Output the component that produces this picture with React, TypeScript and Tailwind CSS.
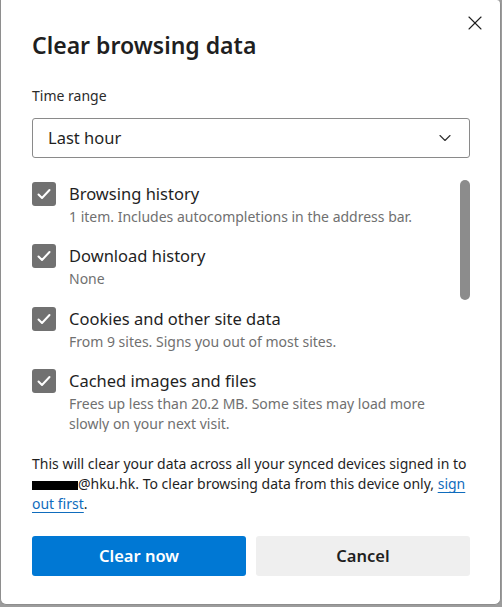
import { X, ChevronDown } from "lucide-react";

const items = [
  {
    title: "Browsing history",
    description: "1 item. Includes autocompletions in the address bar.",
  },
  {
    title: "Download history",
    description: "None",
  },
  {
    title: "Cookies and other site data",
    description: "From 9 sites. Signs you out of most sites.",
  },
  {
    title: "Cached images and files",
    description: "Frees up less than 20.2 MB. Some sites may load more slowly on your next visit.",
  },
];

const CheckBox = () => (
  <div className="w-[24px] h-[24px] shrink-0 rounded-[3px] bg-[#717171] flex items-center justify-center">
    <svg width="16" height="16" viewBox="0 0 16 16" fill="none">
      <path d="M2.5 8.5 L6 12 L13.5 4" stroke="white" strokeWidth="2" strokeLinecap="round" strokeLinejoin="round" />
    </svg>
  </div>
);

const App = () => {
  return (
    <div className="w-[502px] h-[607px] bg-[#9c9c9c] overflow-hidden" style={{ fontFamily: '"Noto Sans", "Open Sans", sans-serif' }}>
      <div className="w-[501px] h-[605px] bg-white border-l border-r border-b border-[#8e8e8e] rounded-b-[6px] rounded-tr-[4px] relative flex flex-col">
        {/* Close */}
        <button className="absolute top-[10px] right-[12px] w-[26px] h-[26px] flex items-center justify-center text-[#1f1f1f]">
          <X className="w-[24px] h-[24px]" strokeWidth={1.1} />
        </button>

        <h1 className="pl-[31px] pt-[27px] text-[23px] leading-[36px] font-semibold text-[#1f1f1f]">
          Clear browsing data
        </h1>

        <div className="pl-[31px] mt-[23px] text-[14px] leading-[20px] text-[#2b2b2b]">Time range</div>

        <div className="ml-[31px] mr-[30px] mt-[12px] h-[40px] rounded-[3px] border border-[#8a8a8a] flex items-center justify-between pl-[15px] pr-[14px]">
          <span className="text-[16.5px] text-[#1f1f1f]">Last hour</span>
          <ChevronDown className="w-[20px] h-[20px] text-[#333]" strokeWidth={1.4} />
        </div>

        {/* Scrollable list */}
        <div className="relative mt-[12px] h-[262px] overflow-hidden">
          <div className="absolute right-[30px] top-[10px] w-[10px] h-[120px] rounded-full bg-[#8c8c8c]" />
          <div className="pl-[31px] pr-[60px] pt-[12px] flex flex-col gap-[17.3px]">
            {items.map((item, index) => (
              <div key={index} className="flex gap-[13px]">
                <CheckBox />
                <div className="flex flex-col -mt-[1px]">
                  <span className="text-[16.5px] leading-[26px] text-[#1f1f1f]">{item.title}</span>
                  <span className="text-[14px] leading-[20px] text-[#707070]">{item.description}</span>
                </div>
              </div>
            ))}
          </div>
        </div>

        <p className="pl-[31px] pr-[30px] mt-[22px] text-[14px] leading-[20px] text-[#1f1f1f]">
          This will clear your data across all your synced devices signed in to{" "}
          <span className="inline-block w-[46px] h-[9px] bg-black align-middle" />
          @hku.hk. To clear browsing data from this device only,{" "}
          <a className="text-[#0f6cbd] underline underline-offset-[3px] decoration-[#0f6cbd]">sign out first</a>.
        </p>

        <div className="pl-[31px] pr-[30px] mt-[22px] grid grid-cols-2 gap-[10px]">
          <button className="h-[40px] rounded-[3px] bg-[#0078d4] text-white text-[16.5px] font-semibold">
            Clear now
          </button>
          <button className="h-[40px] rounded-[3px] bg-[#efefef] text-[#1f1f1f] text-[16.5px] font-semibold">
            Cancel
          </button>
        </div>
      </div>
    </div>
  );
};

export default App;
